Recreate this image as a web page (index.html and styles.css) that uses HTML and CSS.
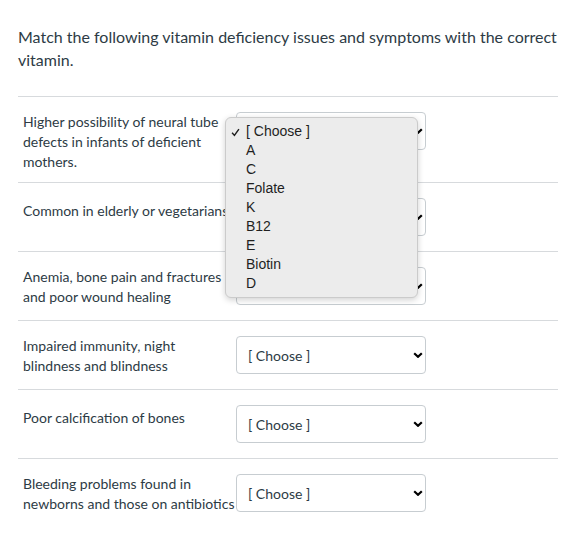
FILE: index.html
```html
<!DOCTYPE html>
<html>
<head>
<meta charset="utf-8">
<link rel="stylesheet" href="styles.css">
</head>
<body>
<div class="page">
  <p class="question">Match the following vitamin deficiency issues and symptoms with the correct vitamin.</p>
  <div class="answers">
    <div class="row">
      <div class="left">Higher possibility of neural tube defects in infants of deficient mothers.</div>
      <div class="select"><span>[ Choose ]</span><svg class="chev" viewBox="0 0 10 6" width="10" height="6"><path d="M1.2 1.2l3.8 3.6 3.8-3.6" fill="none" stroke="#000" stroke-width="2.2"/></svg></div>
    </div>
    <div class="row">
      <div class="left single">Common in elderly or vegetarians</div>
      <div class="select"><span>[ Choose ]</span><svg class="chev" viewBox="0 0 10 6" width="10" height="6"><path d="M1.2 1.2l3.8 3.6 3.8-3.6" fill="none" stroke="#000" stroke-width="2.2"/></svg></div>
    </div>
    <div class="row">
      <div class="left">Anemia, bone pain and fractures and poor wound healing</div>
      <div class="select"><span>[ Choose ]</span><svg class="chev" viewBox="0 0 10 6" width="10" height="6"><path d="M1.2 1.2l3.8 3.6 3.8-3.6" fill="none" stroke="#000" stroke-width="2.2"/></svg></div>
    </div>
    <div class="row">
      <div class="left">Impaired immunity, night blindness and blindness</div>
      <div class="select"><span>[ Choose ]</span><svg class="chev" viewBox="0 0 10 6" width="10" height="6"><path d="M1.2 1.2l3.8 3.6 3.8-3.6" fill="none" stroke="#000" stroke-width="2.2"/></svg></div>
    </div>
    <div class="row">
      <div class="left single">Poor calcification of bones</div>
      <div class="select"><span>[ Choose ]</span><svg class="chev" viewBox="0 0 10 6" width="10" height="6"><path d="M1.2 1.2l3.8 3.6 3.8-3.6" fill="none" stroke="#000" stroke-width="2.2"/></svg></div>
    </div>
    <div class="row">
      <div class="left">Bleeding problems found in newborns and those on antibiotics</div>
      <div class="select"><span>[ Choose ]</span><svg class="chev" viewBox="0 0 10 6" width="10" height="6"><path d="M1.2 1.2l3.8 3.6 3.8-3.6" fill="none" stroke="#000" stroke-width="2.2"/></svg></div>
    </div>
  </div>
  <ul class="popup">
    <li class="checked"><svg class="check" viewBox="0 0 10 10" width="9" height="9"><path d="M1.2 5.4l2.6 2.8 5-7" fill="none" stroke="#1f1f1f" stroke-width="1.6"/></svg>[ Choose ]</li>
    <li>A</li>
    <li>C</li>
    <li>Folate</li>
    <li>K</li>
    <li>B12</li>
    <li>E</li>
    <li>Biotin</li>
    <li>D</li>
  </ul>
</div>
</body>
</html>
```
FILE: styles.css
```css
html, body {
  margin: 0;
  padding: 0;
  background: #fff;
}
.page {
  position: relative;
  padding: 25px 17px 0 18px;
  font-family: Lato, "Liberation Sans", sans-serif;
  color: #2d3b45;
}
.question {
  margin: 0 0 25px 0;
  font-size: 16px;
  line-height: 23px;
}
.row {
  display: flex;
  align-items: flex-start;
  border-top: 1px solid #d7dadd;
  padding: 15px 0 10px 5px;
}
.left {
  width: 213px;
  font-size: 14px;
  line-height: 20px;
}
.left.single {
  padding-top: 3px;
}
.select {
  box-sizing: border-box;
  width: 190px;
  height: 38px;
  margin-bottom: 5px;
  border: 1px solid #c7cdd1;
  border-radius: 4px;
  background: #fff;
  display: flex;
  align-items: center;
  justify-content: space-between;
  padding: 0 2px 0 11px;
  font-size: 14px;
  color: #2d3b45;
}
.chev {
  display: block;
}
.popup {
  position: absolute;
  left: 225px;
  top: 117px;
  width: 193px;
  box-sizing: border-box;
  margin: 0;
  padding: 4px 0 4px 0;
  list-style: none;
  background: #ececec;
  border: 1px solid #cbcbcb;
  border-radius: 6px;
  box-shadow: 0 2px 6px rgba(0,0,0,0.18);
  font-family: "Liberation Sans", Arial, sans-serif;
  font-size: 14px;
  line-height: 19px;
  color: #1f1f1f;
}
.popup li {
  padding-left: 20px;
  position: relative;
}
.check {
  position: absolute;
  left: 5px;
  top: 6px;
}
```
